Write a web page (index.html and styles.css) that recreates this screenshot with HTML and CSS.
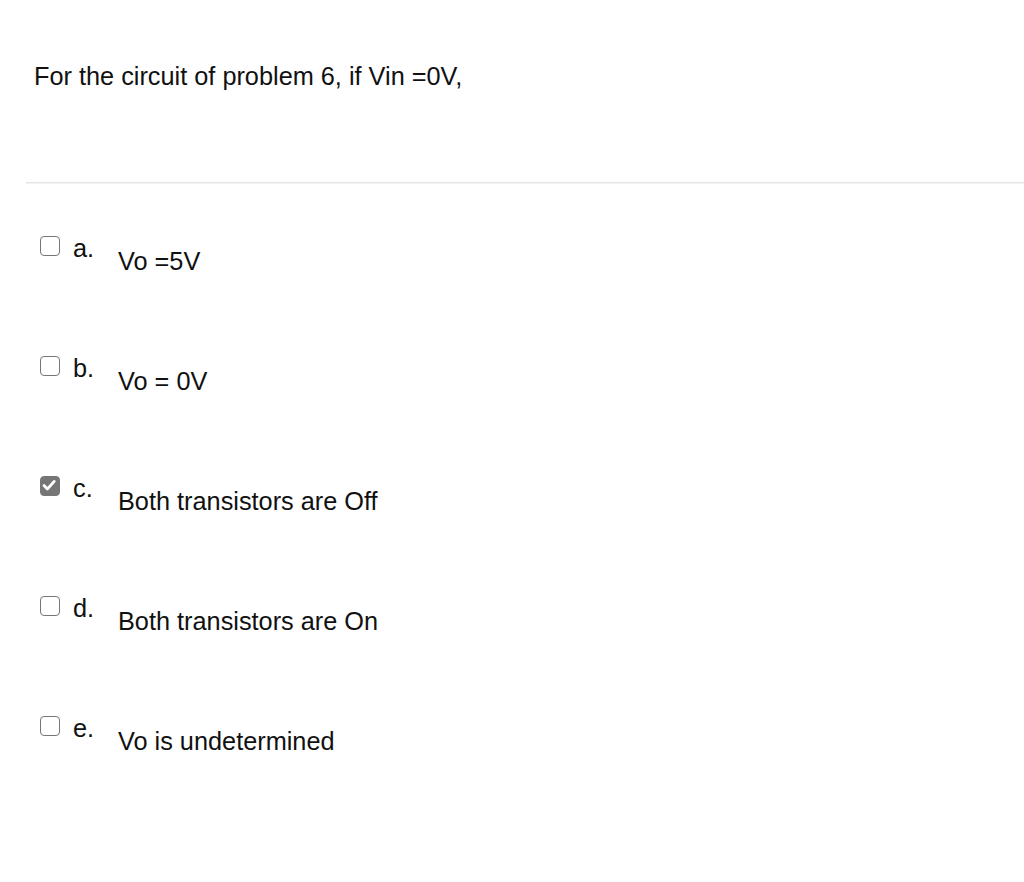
FILE: index.html
```html
<!DOCTYPE html>
<html>
<head>
<meta charset="utf-8">
<link rel="stylesheet" href="styles.css">
</head>
<body>
<div class="page">
  <div class="qtext">For the circuit of problem 6, if Vin =0V,</div>
  <div class="sep"></div>
  <div class="answers">
    <div class="opt">
      <span class="cb"></span>
      <span class="lbl">a.</span>
      <span class="ans">Vo =5V</span>
    </div>
    <div class="opt">
      <span class="cb"></span>
      <span class="lbl">b.</span>
      <span class="ans">Vo = 0V</span>
    </div>
    <div class="opt">
      <span class="cb checked"><svg viewBox="0 0 20 20" width="20" height="20"><path d="M5 10.6 L8.4 14 L15.2 6.4" fill="none" stroke="#fff" stroke-width="2.8" stroke-linecap="round" stroke-linejoin="round"/></svg></span>
      <span class="lbl">c.</span>
      <span class="ans">Both transistors are Off</span>
    </div>
    <div class="opt">
      <span class="cb"></span>
      <span class="lbl">d.</span>
      <span class="ans">Both transistors are On</span>
    </div>
    <div class="opt">
      <span class="cb"></span>
      <span class="lbl">e.</span>
      <span class="ans">Vo is undetermined</span>
    </div>
  </div>
</div>
</body>
</html>
```

FILE: styles.css
```css
html, body {
  margin: 0;
  padding: 0;
  background: #fff;
}
body {
  font-family: "Liberation Sans", Arial, sans-serif;
  color: #111;
  font-size: 25.3px;
}
.page {
  padding-top: 60px;
}
.qtext {
  padding-left: 34px;
  line-height: 32px;
  height: 32px;
}
.sep {
  margin-top: 90px;
  margin-left: 26px;
  height: 1px;
  background: #e4e4e4;
  border-bottom: 1px solid #f3f3f3;
}
.answers {
  padding-top: 50px;
}
.opt {
  display: flex;
  align-items: flex-start;
  height: 120px;
  padding-left: 40px;
}
.cb {
  box-sizing: border-box;
  width: 20px;
  height: 20px;
  margin-top: 2px;
  border: 1.6px solid #767676;
  border-radius: 4px;
  background: #fff;
  flex: none;
  position: relative;
}
.cb.checked {
  background: #767676;
  border-color: #767676;
}
.cb svg {
  position: absolute;
  left: -1.6px;
  top: -1.6px;
  width: 20px;
  height: 20px;
}
.lbl {
  margin-left: 13px;
  width: 45px;
  line-height: 28px;
}
.ans {
  margin-top: 13px;
  line-height: 28px;
}
```
